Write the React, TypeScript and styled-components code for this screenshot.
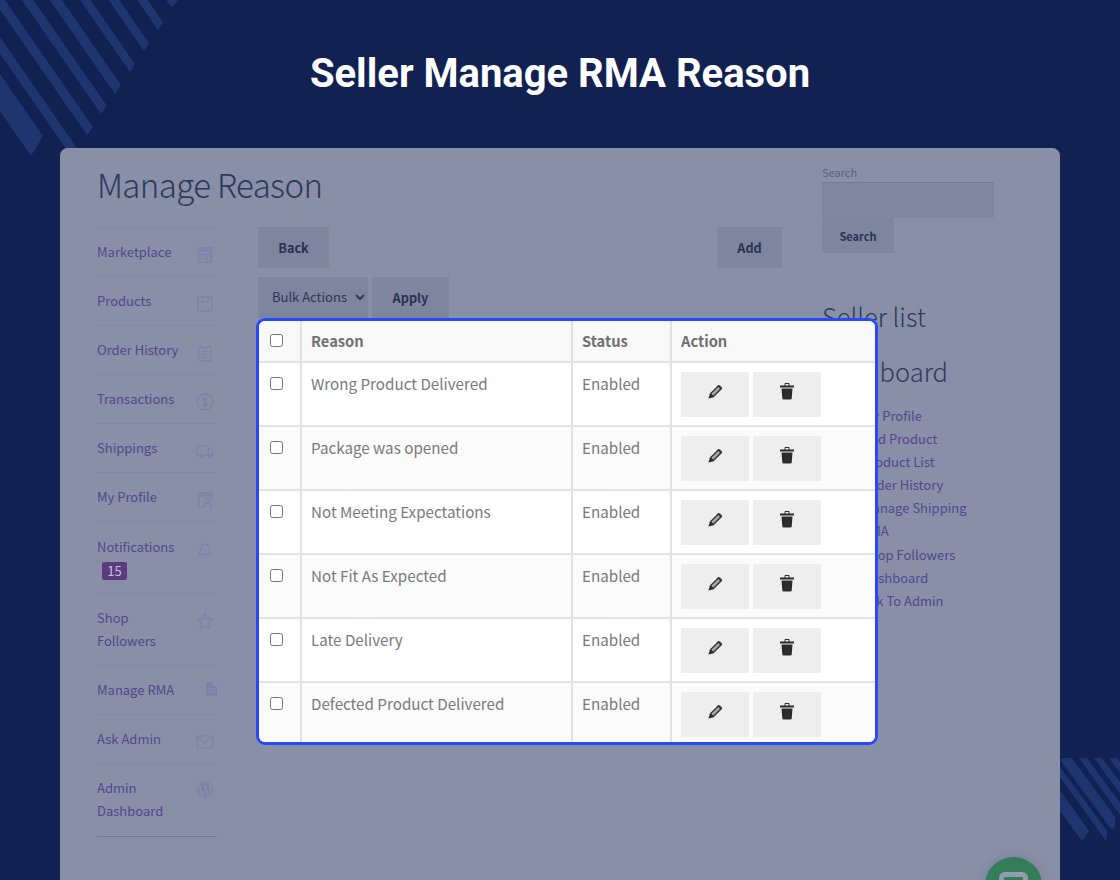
import styled, { createGlobalStyle } from "styled-components";
import { FaWordpress } from "react-icons/fa";

const GlobalStyle = createGlobalStyle`
    html, body {
        margin: 0;
        height: 880px;
        overflow: hidden;
        background: #102152;
    }
    * {
        box-sizing: border-box;
    }
`;

const sourceSans = `"Noto Sans CJK SC", "Noto Sans", sans-serif`;

const Page = styled.div`
    position: relative;
    width: 1120px;
    height: 880px;
    overflow: hidden;
    background: #102152;
    font-family: ${sourceSans};
`;

const Stripes = styled.svg`
    position: absolute;
    top: 0;
    left: 0;
    width: 1120px;
    height: 880px;
    fill: #1f356f;
`;

const Hero = styled.header`
    position: relative;
    height: 148px;
    display: flex;
    justify-content: center;
    align-items: center;
`;

const HeroTitle = styled.h1`
    margin: 0 0 2px;
    font-family: Roboto, sans-serif;
    font-size: 40px;
    font-weight: 700;
    color: #ffffff;
`;

const Card = styled.section`
    position: relative;
    width: 1000px;
    height: 760px;
    margin: 0 auto;
    padding: 0 66px 0 37px;
    display: grid;
    grid-template-columns: 685px 172px;
    column-gap: 40px;
    border-radius: 8px 8px 0 0;
    background: #888fa7;
`;

const Primary = styled.div`
    display: flex;
    flex-direction: column;
`;

const PageTitle = styled.h2`
    margin: 10px 0 0;
    height: 69px;
    font-size: 33px;
    line-height: 52px;
    font-weight: 300;
    letter-spacing: -0.6px;
    color: #2e3a5c;
`;

const Columns = styled.div`
    display: grid;
    grid-template-columns: 120px 524px;
    column-gap: 41px;
`;

const SideNav = styled.nav`
    width: 120px;
    border-top: 1px solid #828aa2;
    border-bottom: 1px solid #6f768f;
`;

const NavItem = styled.div`
    display: flex;
    justify-content: space-between;
    align-items: flex-start;
    padding: 12px 0 13px;
    border-top: 1px solid #828aa2;
    font-size: 13px;
    line-height: 23px;
    color: #54468f;
    &:first-child {
        border-top: 0;
    }
    &:last-child {
        padding-bottom: 14px;
    }
`;

const BadgeNavItem = styled(NavItem)`
    padding-top: 13px;
`;

const NavLabel = styled.span`
    display: block;
    max-width: 80px;
    white-space: normal;
`;

const NavLabelWide = styled(NavLabel)`
    max-width: 100px;
    white-space: nowrap;
`;

const Badge = styled.span`
    display: block;
    width: 25px;
    height: 18px;
    margin: 4px 0 0 5px;
    border-radius: 2px;
    background: #5c3a80;
    color: #c3c2d4;
    font-size: 13px;
    line-height: 18px;
    text-align: center;
`;

const NavIcon = styled.svg`
    flex: none;
    width: 18px;
    height: 18px;
    margin: 6px 3px -1px 0;
    fill: none;
    stroke: #7a81ab;
    stroke-width: 1.5;
    stroke-linecap: round;
    stroke-linejoin: round;
`;

const SolidNavIcon = styled.svg`
    flex: none;
    width: 11px;
    height: 14px;
    margin: 4px 0 0 0;
    fill: #7a81ab;
`;

const WpIcon = styled(FaWordpress)`
    flex: none;
    width: 18px;
    height: 18px;
    margin: 5px 3px 0 0;
    color: #7a81ab;
`;

const Main = styled.div`
    display: flex;
    flex-direction: column;
    gap: 9px;
`;

const ButtonRow = styled.div`
    display: flex;
    justify-content: space-between;
`;

const ActionRow = styled.div`
    display: flex;
    gap: 4px;
`;

const GhostButton = styled.button<{ $width: number; $height?: number; $size?: number }>`
    width: ${(props) => props.$width}px;
    height: ${(props) => props.$height ?? 41}px;
    padding: 0;
    border: 0;
    background: #7e859f;
    color: #2a3252;
    font-family: ${sourceSans};
    font-size: ${(props) => props.$size ?? 12.7}px;
    font-weight: 700;
`;

const BulkSelect = styled.select`
    width: 110px;
    height: 41px;
    padding: 0 0 2px 10px;
    border: 0;
    background-color: #7e859f;
    color: #2e3656;
    font-family: ${sourceSans};
    font-size: 13px;
`;

const Aside = styled.aside`
    padding-top: 14px;
`;

const SearchLabel = styled.div`
    font-size: 11px;
    line-height: 20px;
    color: #5b6381;
`;

const SearchInput = styled.div`
    height: 36px;
    border-top: 1px solid #737a95;
    background: #7f86a0;
`;

const WidgetTitle = styled.h3`
    margin: 0;
    font-size: 25.5px;
    line-height: 42px;
    font-weight: 300;
    color: #2e3a5c;
`;

const SellerTitle = styled(WidgetTitle)`
    margin-top: 42px;
`;

const DashboardTitle = styled(WidgetTitle)`
    margin-top: 13px;
`;

const LinkList = styled.ul`
    margin: 12px 0 0;
    padding: 0 0 0 40px;
    list-style: none;
    font-size: 13px;
    line-height: 23.1px;
    color: #54468f;
    white-space: nowrap;
`;

const TableFrame = styled.div`
    position: absolute;
    left: 196px;
    top: 170px;
    width: 622px;
    height: 427px;
    border: 3px solid #2549ff;
    border-radius: 9px;
    overflow: hidden;
    background: #ffffff;
`;

const ReasonTable = styled.table`
    width: 100%;
    border-collapse: collapse;
    table-layout: fixed;
    font-size: 15.2px;
    line-height: 22px;
    color: #7a7a7a;
`;

const HeadCell = styled.th<{ $width?: number }>`
    width: ${(props) => (props.$width ? `${props.$width}px` : "auto")};
    height: 41px;
    padding: 0 9px;
    border-bottom: 2px solid #e2e2e2;
    border-left: 2px solid #e2e2e2;
    background: #f9f9f9;
    color: #707070;
    text-align: left;
    font-size: 14.7px;
    font-weight: 700;
    &:first-child {
        border-left: 0;
    }
`;

const BodyRow = styled.tr`
    &:nth-child(even) td {
        background: #fbfbfb;
    }
    &:last-child td {
        border-bottom: 0;
    }
`;

const BodyCell = styled.td`
    height: 64px;
    padding: 9px 9px 8px;
    vertical-align: top;
    border-bottom: 2px solid #e2e2e2;
    border-left: 2px solid #e2e2e2;
    background: #ffffff;
    &:first-child {
        border-left: 0;
    }
`;

const Check = styled.input`
    display: block;
    width: 13px;
    height: 13px;
    margin: 5px 0 0 2px;
`;

const HeadCheck = styled(Check)`
    margin: 0 0 1px 2px;
`;

const IconButtons = styled.div`
    display: flex;
    gap: 4px;
`;

const IconButton = styled.button`
    width: 68px;
    height: 45px;
    padding: 0 0 7px;
    border: 0;
    background: #eeeeee;
    display: flex;
    align-items: center;
    justify-content: center;
`;

const PencilSvg = styled.svg`
    width: 15px;
    height: 15px;
`;

const TrashSvg = styled.svg`
    width: 16px;
    height: 18px;
`;

const ChatBubble = styled.div`
    position: absolute;
    left: 985px;
    top: 857px;
    width: 57px;
    height: 57px;
    border-radius: 50%;
    background: #347d59;
    box-shadow: 0 0 8px rgba(70, 80, 110, 0.25);
`;

const ChatGlyph = styled.div`
    position: absolute;
    left: 14px;
    top: 15px;
    width: 29px;
    height: 26px;
    border: 5px solid #8f9db0;
    border-radius: 6px;
`;

const topStripes = [
    [178, 0, 172, 8],
    [163, 22, 158, 30],
    [149, 43, 144, 51],
    [135, 64, 130, 72],
    [121, 85, 115, 94],
    [107, 106, 101, 114],
    [93, 127, 87, 135],
    [77, 148, 71, 156],
    [43, 136, 31, 156],
];

const bottomStripes = [
    "1063,758 1072,758 1115,817 1115,827 1112,830 1060,760",
    "1079,758 1087,758 1120,803 1120,815",
    "1094,758 1102,758 1120,782 1120,794",
    "1109,758 1117,758 1120,762 1120,773",
    "1060,767 1107,831 1106,841 1060,777",
    "1060,790 1089,831 1082,841 1060,811",
];

const stripePoints = ([rx, ry, bx, by]: number[]) =>
    `${rx},${ry} ${bx},${by} ${bx - 200},${by - 288} ${rx - 200},${ry - 288}`;

const navItems = ["Marketplace", "Products", "Order History", "Transactions", "Shippings", "My Profile"];

const navIcons = [
    <>
        <path d="M2.500 2.500h19v4h-19zM3.500 6.500v15h17v-15M6 11h6v6H6zM15 21v-10h4v10M5.500 2.500v4M9.500 2.500v4M14 2.500v4M18 2.500v4" />
    </>,
    <>
        <rect x="2.500" y="2.500" width="19" height="19" rx="2.500" />
        <path d="M8 2.500v7h8v-7M15 17.500h3" />
    </>,
    <>
        <path d="M6 3.500h2a4 2 0 0 0 8 0h2a2 2 0 0 1 2 2v15a2 2 0 0 1-2 2H6a2 2 0 0 1-2-2v-15a2 2 0 0 1 2-2zM8 10h8M8 14h8M8 18h5" />
    </>,
    <>
        <circle cx="12" cy="12" r="10.500" />
        <path d="M15 8.500c-1-1.200-6-1.600-6 1 0 2.800 6.400 2 6.400 5 0 2.600-5.400 2.400-6.700 1M12 5.500v13" />
    </>,
    <>
        <path d="M5 18H3a1.500 1.500 0 0 1-1.500-1.500v-10A1.500 1.500 0 0 1 3 5h12a1.500 1.500 0 0 1 1.500 1.500V18H9M16.500 9.500h3l3 4v4.500h-2M16.500 18h0" />
        <circle cx="7" cy="18.500" r="2" />
        <circle cx="18.500" cy="18.500" r="2" />
    </>,
    <>
        <path d="M2.500 2.500h19v4h-19zM3.500 6.500v15h5M20.500 6.500v5M6 2.500v4M10 2.500v4M14 2.500v4M18 2.500v4M11 22c0-4 2-6 4.500-6s4.500 2 4.500 6" />
        <circle cx="15.500" cy="12.500" r="3" />
    </>,
];

const reasons = [
    "Wrong Product Delivered",
    "Package was opened",
    "Not Meeting Expectations",
    "Not Fit As Expected",
    "Late Delivery",
    "Defected Product Delivered",
];

const sideLinks = [
    "My Profile",
    "Add Product",
    "Product List",
    "Order History",
    "Manage Shipping",
    "RMA",
    "Shop Followers",
    "Dashboard",
    "Ask To Admin",
];

function PencilIcon() {
    return (
        <PencilSvg viewBox="0 0 16 16">
            <path d="M0.500 15.500L2 10l8.500-8.500a1.500 1.500 0 0 1 2.100 0l1.900 1.900a1.500 1.500 0 0 1 0 2.100L6 14z" fill="#2c2c2c" />
            <path d="M3.600 10.400L10.900 3.100l2 2L5.600 12.400z" fill="#a9a9a9" />
        </PencilSvg>
    );
}

function TrashIcon() {
    return (
        <TrashSvg viewBox="0 0 16 18">
            <path d="M1 3.500h14v2H1zM5.500 3.500V2a1 1 0 0 1 1-1h3a1 1 0 0 1 1 1v1.500h-1V2h-3v1.500z" fill="#2c2c2c" />
            <path d="M2.500 6.500h11l-.8 10a1.200 1.200 0 0 1-1.200 1h-7a1.200 1.200 0 0 1-1.200-1z" fill="#2c2c2c" />
        </TrashSvg>
    );
}

function App() {
    return (
        <Page>
            <GlobalStyle />
            <Stripes viewBox="0 0 1120 880">
                {topStripes.map((stripe) => (
                    <polygon key={stripe[0]} points={stripePoints(stripe)} />
                ))}
                {bottomStripes.map((points) => (
                    <polygon key={points} points={points} />
                ))}
            </Stripes>
            <Hero>
                <HeroTitle>Seller Manage RMA Reason</HeroTitle>
            </Hero>
            <Card>
                <Primary>
                    <PageTitle>Manage Reason</PageTitle>
                    <Columns>
                        <SideNav>
                            {navItems.map((item, index) => (
                                <NavItem key={item}>
                                    <NavLabelWide>{item}</NavLabelWide>
                                    <NavIcon viewBox="0 0 24 24">{navIcons[index]}</NavIcon>
                                </NavItem>
                            ))}
                            <BadgeNavItem>
                                <NavLabel>
                                    Notifications
                                    <Badge>15</Badge>
                                </NavLabel>
                                <NavIcon viewBox="0 0 24 24">
                                    <path d="M4 18c2-2 2-4 2-8a6 6 0 0 1 12 0c0 4 0 6 2 8zM10 21.500h4" />
                                </NavIcon>
                            </BadgeNavItem>
                            <NavItem>
                                <NavLabel>Shop Followers</NavLabel>
                                <NavIcon viewBox="0 0 24 24">
                                    <path d="M12 2l3 6.800 7.400.8-5.500 5 1.500 7.300L12 18.200l-6.400 3.700 1.500-7.300-5.500-5L9 8.800z" />
                                </NavIcon>
                            </NavItem>
                            <NavItem>
                                <NavLabelWide>Manage RMA</NavLabelWide>
                                <SolidNavIcon viewBox="0 0 11 14">
                                    <path d="M0 0h7l4 4v10H0zM7 0v4h4zM2 6.500v1h7v-1zM2 9v1h7V9z" fillRule="evenodd" />
                                </SolidNavIcon>
                            </NavItem>
                            <NavItem>
                                <NavLabelWide>Ask Admin</NavLabelWide>
                                <NavIcon viewBox="0 0 24 24">
                                    <rect x="1.500" y="4" width="21" height="16" rx="2" />
                                    <path d="M2 5.500l10 7.500 10-7.500" />
                                </NavIcon>
                            </NavItem>
                            <NavItem>
                                <NavLabel>Admin Dashboard</NavLabel>
                                <WpIcon />
                            </NavItem>
                        </SideNav>
                        <Main>
                            <ButtonRow>
                                <GhostButton $width={71}>Back</GhostButton>
                                <GhostButton $width={65}>Add</GhostButton>
                            </ButtonRow>
                            <ActionRow>
                                <BulkSelect defaultValue="bulk">
                                    <option value="bulk">Bulk Actions</option>
                                </BulkSelect>
                                <GhostButton $width={77}>Apply</GhostButton>
                            </ActionRow>
                        </Main>
                    </Columns>
                </Primary>
                <Aside>
                    <SearchLabel>Search</SearchLabel>
                    <SearchInput />
                    <GhostButton $width={72} $height={35} $size={11}>
                        Search
                    </GhostButton>
                    <SellerTitle>Seller list</SellerTitle>
                    <DashboardTitle>Dashboard</DashboardTitle>
                    <LinkList>
                        {sideLinks.map((link) => (
                            <li key={link}>{link}</li>
                        ))}
                    </LinkList>
                </Aside>
                <TableFrame>
                    <ReasonTable>
                        <thead>
                            <tr>
                                <HeadCell $width={42}>
                                    <HeadCheck type="checkbox" />
                                </HeadCell>
                                <HeadCell $width={271}>Reason</HeadCell>
                                <HeadCell $width={99}>Status</HeadCell>
                                <HeadCell>Action</HeadCell>
                            </tr>
                        </thead>
                        <tbody>
                            {reasons.map((reason) => (
                                <BodyRow key={reason}>
                                    <BodyCell>
                                        <Check type="checkbox" />
                                    </BodyCell>
                                    <BodyCell>{reason}</BodyCell>
                                    <BodyCell>Enabled</BodyCell>
                                    <BodyCell>
                                        <IconButtons>
                                            <IconButton>
                                                <PencilIcon />
                                            </IconButton>
                                            <IconButton>
                                                <TrashIcon />
                                            </IconButton>
                                        </IconButtons>
                                    </BodyCell>
                                </BodyRow>
                            ))}
                        </tbody>
                    </ReasonTable>
                </TableFrame>
            </Card>
            <ChatBubble>
                <ChatGlyph />
            </ChatBubble>
        </Page>
    );
}

export default App;
